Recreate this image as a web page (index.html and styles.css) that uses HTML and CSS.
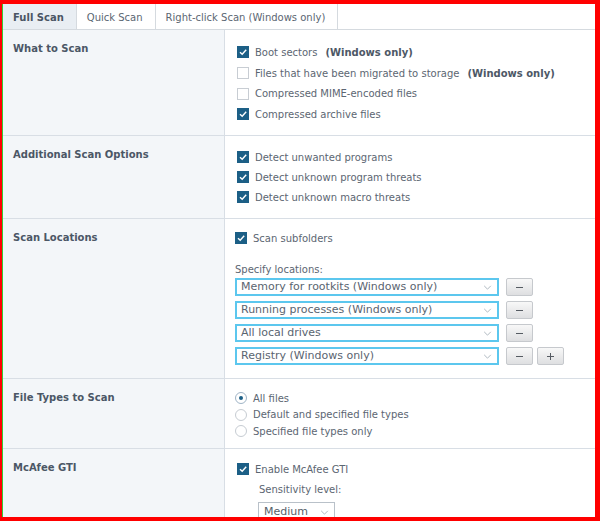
FILE: index.html
```html
<!DOCTYPE html>
<html>
<head>
<meta charset="utf-8">
<link rel="stylesheet" href="styles.css">
</head>
<body>
<div class="frame">
  <div class="tabs">
    <div class="tab active">Full Scan</div>
    <div class="tab">Quick Scan</div>
    <div class="tab">Right-click Scan (Windows only)</div>
  </div>

  <div class="row row-what">
    <div class="label">What to Scan</div>
    <div class="opts opts-what">
      <div class="opt"><span class="cb on"><svg viewBox="0 0 12 12"><path d="M3 6.2 L5.2 8.3 L9.2 3.8"/></svg></span><span>Boot sectors</span><b class="note">(Windows only)</b></div>
      <div class="opt"><span class="cb"></span><span>Files that have been migrated to storage</span><b class="note">(Windows only)</b></div>
      <div class="opt"><span class="cb"></span><span>Compressed MIME-encoded files</span></div>
      <div class="opt"><span class="cb on"><svg viewBox="0 0 12 12"><path d="M3 6.2 L5.2 8.3 L9.2 3.8"/></svg></span><span>Compressed archive files</span></div>
    </div>
  </div>

  <div class="row row-add">
    <div class="label">Additional Scan Options</div>
    <div class="opts opts-add">
      <div class="opt"><span class="cb on"><svg viewBox="0 0 12 12"><path d="M3 6.2 L5.2 8.3 L9.2 3.8"/></svg></span><span>Detect unwanted programs</span></div>
      <div class="opt"><span class="cb on"><svg viewBox="0 0 12 12"><path d="M3 6.2 L5.2 8.3 L9.2 3.8"/></svg></span><span>Detect unknown program threats</span></div>
      <div class="opt"><span class="cb on"><svg viewBox="0 0 12 12"><path d="M3 6.2 L5.2 8.3 L9.2 3.8"/></svg></span><span>Detect unknown macro threats</span></div>
    </div>
  </div>

  <div class="row row-loc">
    <div class="label">Scan Locations</div>
    <div class="opts opts-loc">
      <div class="opt opt-sub"><span class="cb on"><svg viewBox="0 0 12 12"><path d="M3 6.2 L5.2 8.3 L9.2 3.8"/></svg></span><span>Scan subfolders</span></div>
      <div class="spec">Specify locations:</div>
      <div class="loc">
        <div class="sel">Memory for rootkits (Windows only)<svg class="chev" viewBox="0 0 10 6"><path d="M1 1 L5 5 L9 1"/></svg></div>
        <div class="btn"><span class="minus"></span></div>
      </div>
      <div class="loc">
        <div class="sel">Running processes (Windows only)<svg class="chev" viewBox="0 0 10 6"><path d="M1 1 L5 5 L9 1"/></svg></div>
        <div class="btn"><span class="minus"></span></div>
      </div>
      <div class="loc">
        <div class="sel">All local drives<svg class="chev" viewBox="0 0 10 6"><path d="M1 1 L5 5 L9 1"/></svg></div>
        <div class="btn"><span class="minus"></span></div>
      </div>
      <div class="loc">
        <div class="sel">Registry (Windows only)<svg class="chev" viewBox="0 0 10 6"><path d="M1 1 L5 5 L9 1"/></svg></div>
        <div class="btn"><span class="minus"></span></div>
        <div class="btn"><span class="plus"></span></div>
      </div>
    </div>
  </div>

  <div class="row row-types">
    <div class="label">File Types to Scan</div>
    <div class="opts opts-types">
      <div class="opt ropt"><span class="rb on"></span><span>All files</span></div>
      <div class="opt ropt"><span class="rb"></span><span>Default and specified file types</span></div>
      <div class="opt ropt"><span class="rb"></span><span>Specified file types only</span></div>
    </div>
  </div>

  <div class="row row-gti">
    <div class="label">McAfee GTI</div>
    <div class="opts opts-gti">
      <div class="opt"><span class="cb on"><svg viewBox="0 0 12 12"><path d="M3 6.2 L5.2 8.3 L9.2 3.8"/></svg></span><span>Enable McAfee GTI</span></div>
      <div class="sens">Sensitivity level:</div>
      <div class="msel">Medium<svg class="chev" viewBox="0 0 10 6"><path d="M1 1 L5 5 L9 1"/></svg></div>
    </div>
  </div>
</div>
</body>
</html>
```

FILE: styles.css
```css
html, body {
  margin: 0;
  padding: 0;
  background: #ffffff;
}

.frame {
  box-sizing: border-box;
  width: 600px;
  height: 521px;
  border-style: solid;
  border-color: #ff0000;
  border-width: 4px 5px 4px 2px;
  padding-left: 1px;
  box-shadow: inset 1px 0 0 #33cc33;
  overflow: hidden;
  font-family: "DejaVu Sans", Verdana, sans-serif;
  font-size: 10px;
  color: #5c6672;
  background: #ffffff;
}

.tabs {
  display: flex;
  height: 25px;
  border-bottom: 1px solid #d5dadf;
  background: #ffffff;
}

.tab {
  display: flex;
  align-items: center;
  padding: 2px 12px 0 10px;
  border-right: 1px solid #d5dadf;
  color: #5b6672;
}

.tab.active {
  background: #e9eef3;
  font-weight: bold;
  color: #4a5564;
}

.row {
  box-sizing: border-box;
  display: flex;
  border-bottom: 1px solid #d8dee5;
}

.label {
  box-sizing: border-box;
  width: 222px;
  flex: none;
  background: #f3f6f9;
  border-right: 1px solid #d8dee5;
  padding: 13px 0 0 10px;
  line-height: 12px;
  font-weight: bold;
  color: #4b5766;
}

.opts {
  flex: 1;
  padding-left: 12px;
}

.row-what { height: 106px; }
.row-add { height: 83px; }
.row-loc { height: 160px; }
.row-types { height: 70px; }
.row-gti { height: 80px; border-bottom: none; }

.opts-what { padding-top: 12px; }
.opts-what .opt { height: 20.7px; }
.opts-add { padding-top: 11px; }
.opts-loc { padding-top: 9px; padding-left: 10px; }
.opts-types { padding-top: 11px; padding-left: 10px; }
.opts-gti { padding-top: 10px; }

.opt {
  display: flex;
  align-items: center;
  height: 20px;
  gap: 6px;
  white-space: nowrap;
}

.opt .note {
  margin-left: 2px;
  color: #4d5866;
}

.cb {
  box-sizing: border-box;
  width: 12px;
  height: 12px;
  flex: none;
  border: 1px solid #c8cdd3;
  background: #ffffff;
  display: flex;
}

.cb.on {
  background: #1c5f86;
  border-color: #1c5f86;
}

.cb svg {
  width: 12px;
  height: 12px;
  margin: -1px;
}

.cb svg path {
  fill: none;
  stroke: #ffffff;
  stroke-width: 1.4;
}

.spec {
  margin-top: 16px;
  line-height: 12px;
}

.loc {
  display: flex;
  align-items: center;
  margin-top: 2px;
  margin-bottom: 3px;
  gap: 4px;
}

.spec + .loc {
  margin-top: 2px;
}

.loc + .loc {
  margin-top: 5px;
}

.sel {
  box-sizing: border-box;
  position: relative;
  width: 264px;
  height: 18px;
  border: 2px solid #5cc7ee;
  padding-left: 4px;
  line-height: 14px;
  font-size: 11px;
  color: #5a6470;
  background: #ffffff;
  margin-right: 3px;
}

.chev {
  position: absolute;
  right: 5px;
  top: 5px;
  width: 9px;
  height: 5px;
}

.chev path {
  fill: none;
  stroke: #a9b2bb;
  stroke-width: 1.1;
}

.btn {
  box-sizing: border-box;
  width: 27px;
  height: 18px;
  border: 1px solid #c6c9cd;
  border-radius: 2px;
  background: linear-gradient(#f8f8f8, #dedfe1);
  display: flex;
  align-items: center;
  justify-content: center;
  position: relative;
}

.minus {
  width: 7px;
  height: 1px;
  background: #555b62;
}

.plus {
  position: relative;
  width: 7px;
  height: 1px;
  background: #555b62;
}

.plus::after {
  content: "";
  position: absolute;
  left: 3px;
  top: -3px;
  width: 1px;
  height: 7px;
  background: #555b62;
}

.ropt { height: 16.5px; }

.rb {
  box-sizing: border-box;
  width: 12px;
  height: 12px;
  flex: none;
  border: 1px solid #c6ccd2;
  border-radius: 50%;
  background: #ffffff;
  display: flex;
  align-items: center;
  justify-content: center;
}

.rb.on {
  border-color: #9fb4c6;
}

.rb.on::after {
  content: "";
  width: 4px;
  height: 4px;
  border-radius: 50%;
  background: #1c5f86;
}

.sens {
  margin: 5px 0 0 22px;
  line-height: 12px;
}

.msel {
  box-sizing: border-box;
  position: relative;
  margin: 6px 0 0 21px;
  width: 77px;
  height: 20px;
  border: 1px solid #b9c1c9;
  padding-left: 5px;
  line-height: 18px;
  font-size: 11px;
  color: #555e69;
}

.msel .chev {
  right: 5px;
  top: 7px;
}
```
